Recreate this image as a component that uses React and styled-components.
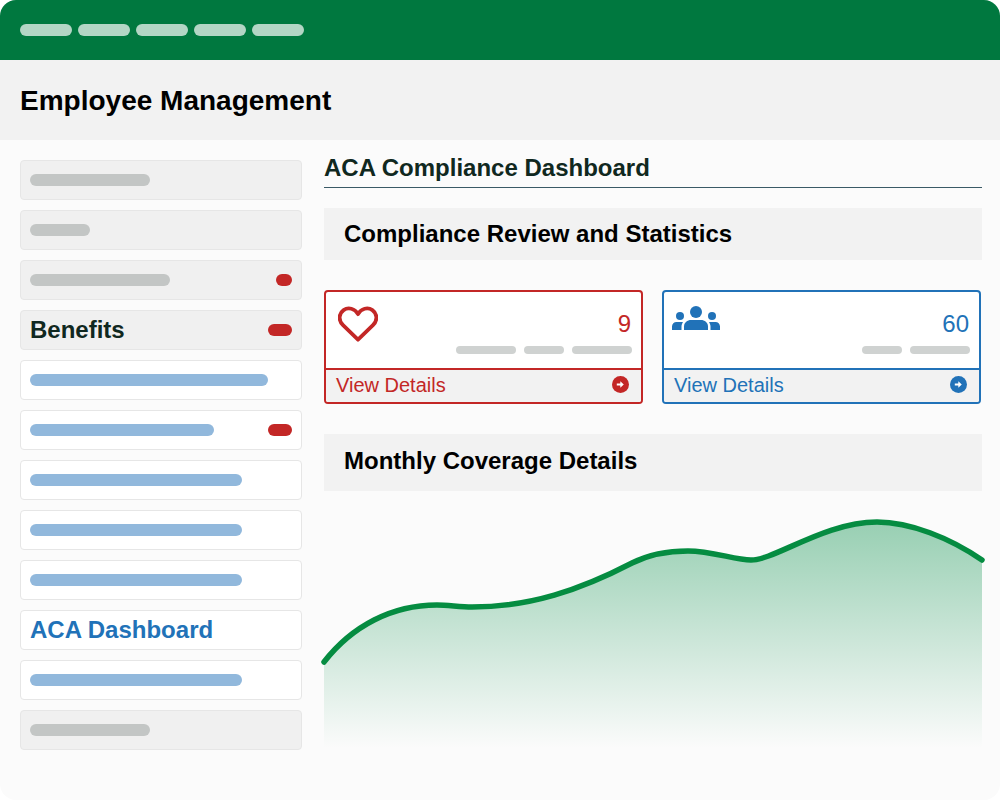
import React from "react";
import styled, { createGlobalStyle } from "styled-components";

const Global = createGlobalStyle`
  html, body { margin: 0; padding: 0; background: #fff; }
  * { box-sizing: border-box; }
  body { font-family: "Liberation Sans", Arial, sans-serif; }
`;
const Page = styled.div`
  width: 1000px; height: 800px; background: #fbfbfb; border-radius: 16px; overflow: hidden;
  display: flex; flex-direction: column;
`;
const TopBar = styled.header`
  height: 60px; background: #00783f; padding: 0 20px; display: flex; align-items: center; gap: 6px;
`;
const NavPill = styled.span`
  width: 52px; height: 12px; border-radius: 6px; background: #b3d6c5;
`;
const TitleBar = styled.div`
  height: 80px; background: #f2f2f2; padding: 2px 20px 0; display: flex; align-items: center;
`;
const PageTitle = styled.h1`
  margin: 0; font-size: 28px; font-weight: 700; color: #000;
`;
const Body = styled.div`
  display: flex; padding: 20px 18px 0 20px; gap: 22px; flex: 1;
`;
const Sidebar = styled.nav`
  width: 282px; display: flex; flex-direction: column; gap: 10px;
`;
const Row = styled.div`
  height: 40px; border: 1px solid #e6e6e6; border-radius: 4px; padding: 0 9px;
  display: flex; align-items: center; justify-content: space-between;
  background: ${p => (p.$muted ? "#f0f0f0" : "#fff")};
`;
const Bar = styled.span`
  height: 12px; border-radius: 6px; width: ${p => p.$w}px;
  background: ${p => (p.$blue ? "#91b8dc" : "#c3c6c5")};
`;
const Badge = styled.span`
  height: 12px; border-radius: 6px; width: ${p => p.$w}px; background: #c32726; flex: none;
`;
const RowLabel = styled.span`
  font-size: 24px; font-weight: 700; color: ${p => p.$color};
`;
const Main = styled.main`
  flex: 1; display: flex; flex-direction: column; min-width: 0;
`;
const DashTitle = styled.h2`
  margin: 0; height: 28px; font-size: 24px; line-height: 15px; font-weight: 700; color: #102820;
  border-bottom: 1px solid #3a5a66;
`;
const Section = styled.div`
  height: ${p => p.$h}px; margin-top: ${p => p.$mt}px; background: #f2f2f2;
  padding: 0 20px ${p => p.$pb}px;
  display: flex; align-items: center; font-size: 24px; font-weight: 700; color: #000;
`;
const Cards = styled.div`
  display: flex; gap: 19px; margin-top: 30px; margin-bottom: 30px;
`;
const Card = styled.div`
  width: 319px; height: 114px; border: 2px solid ${p => p.$c}; border-radius: 4px;
  display: flex; flex-direction: column; overflow: hidden; background: #fff; color: ${p => p.$c};
`;
const CardTop = styled.div`
  height: 78px; flex: none; display: flex; justify-content: space-between; padding: 14px 9px 0 ${p => p.$pl}px;
  border-bottom: 2px solid currentColor;
`;
const CardRight = styled.div`
  display: flex; flex-direction: column; align-items: flex-end;
`;
const Count = styled.span`
  font-size: 24px; line-height: 30px; margin-top: 3px; margin-right: 1px;
`;
const Lines = styled.div`
  display: flex; gap: 8px; margin-top: 7px;
`;
const Line = styled.span`
  width: ${p => p.$w}px; height: 8px; border-radius: 4px; background: #cfd2d1;
`;
const CardFoot = styled.div`
  flex: 1; background: #f2f2f2; display: flex; align-items: center; justify-content: space-between;
  padding: 0 12.5px 2px 10px; font-size: 20px;
`;
const ArrowIcon = styled.svg`
  display: block; margin-bottom: 1px;
`;
const Chart = styled.svg`
  display: block; margin: 29px 0 0 -2px; overflow: visible;
`;

const Arrow = () => (
  <ArrowIcon width="17" height="17" viewBox="0 0 17 17">
    <circle cx="8.5" cy="8.5" r="8.5" fill="currentColor" />
    <path d="M4.800 7.600h3.500V5.300l3.500 3.200-3.500 3.200V9.400H4.800z" fill="#fff" />
  </ArrowIcon>
);
const Heart = () => (
  <svg width="40" height="36" viewBox="0 0 42 38" fill="none" stroke="currentColor" strokeWidth="4" strokeLinejoin="round">
    <path d="M21 35.500 L5.200 20.200 C-0.300 14.800 1 7.600 5.800 4.300 C10.800 0.900 17.600 2.600 21 8.600 C24.400 2.600 31.200 0.900 36.200 4.300 C41 7.600 42.300 14.800 36.800 20.200 Z" />
  </svg>
);
const Group = () => (
  <svg width="48" height="24" viewBox="0 0 48 24" fill="currentColor">
    <circle cx="24" cy="6" r="6" />
    <circle cx="8" cy="10" r="4" />
    <circle cx="40" cy="10" r="4" />
    <path d="M12 24v-3.500C12 16.500 15.500 14 19 14h10c3.500 0 7 2.500 7 6.500V24z" />
    <path d="M0 24v-3.500C0 18 2 16 4.500 16H11c-.8 1.300-1.500 3-1.500 4.500V24z" />
    <path d="M48 24v-3.500C48 18 46 16 43.500 16H37c.8 1.300 1.500 3 1.500 4.500V24z" />
  </svg>
);

const side = [
  { m: true, w: 120 }, { m: true, w: 60 }, { m: true, w: 140, b: 16 },
  { m: true, label: "Benefits", c: "#102820", b: 24 },
  { bl: true, w: 238 }, { bl: true, w: 184, b: 24 }, { bl: true, w: 212 }, { bl: true, w: 212 }, { bl: true, w: 212 },
  { label: "ACA Dashboard", c: "#2172b8" },
  { bl: true, w: 212 }, { m: true, w: 120 },
];

const curve = "M324 662C352 626 392 605 437 605C448 605 460 607 472 607C530 607 580 590 632 563C650 554 668 551 688 551C712 551 735 560 751 560C775 560 825 522 877 522C910 522 950 538 982 560";

export default function App() {
  return (
    <>
      <Global />
      <Page>
        <TopBar>{[0, 1, 2, 3, 4].map(i => <NavPill key={i} />)}</TopBar>
        <TitleBar><PageTitle>Employee Management</PageTitle></TitleBar>
        <Body>
          <Sidebar>
            {side.map((r, i) => (
              <Row key={i} $muted={r.m}>
                {r.label ? <RowLabel $color={r.c}>{r.label}</RowLabel> : <Bar $w={r.w} $blue={r.bl} />}
                {r.b && <Badge $w={r.b} />}
              </Row>
            ))}
          </Sidebar>
          <Main>
            <DashTitle>ACA Compliance Dashboard</DashTitle>
            <Section $h={52} $mt={20} $pb={0}>Compliance Review and Statistics</Section>
            <Cards>
              <Card $c="#c32726">
                <CardTop $pl={12}>
                  <Heart />
                  <CardRight>
                    <Count>9</Count>
                    <Lines><Line $w={60} /><Line $w={40} /><Line $w={60} /></Lines>
                  </CardRight>
                </CardTop>
                <CardFoot>View Details<Arrow /></CardFoot>
              </Card>
              <Card $c="#2172b8">
                <CardTop $pl={8}>
                  <Group />
                  <CardRight>
                    <Count>60</Count>
                    <Lines><Line $w={40} /><Line $w={60} /></Lines>
                  </CardRight>
                </CardTop>
                <CardFoot>View Details<Arrow /></CardFoot>
              </Card>
            </Cards>
            <Section $h={57} $mt={0} $pb={3}>Monthly Coverage Details</Section>
            <Chart width="660" height="240" viewBox="322 520 660 240">
              <defs>
                <linearGradient id="fillG" x1="0" y1="520" x2="0" y2="748" gradientUnits="userSpaceOnUse">
                  <stop offset="0" stopColor="#008c44" stopOpacity="0.4" />
                  <stop offset="1" stopColor="#008c44" stopOpacity="0" />
                </linearGradient>
              </defs>
              <path d={curve + "L982 750L324 750Z"} fill="url(#fillG)" />
              <path d={curve} fill="none" stroke="#058c41" strokeWidth="5.500" strokeLinecap="round" />
            </Chart>
          </Main>
        </Body>
      </Page>
    </>
  );
}
